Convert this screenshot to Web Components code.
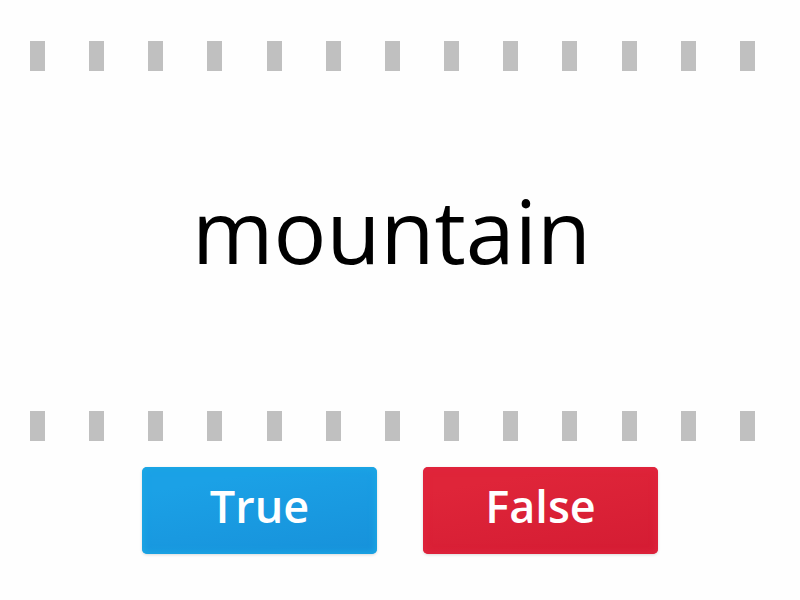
<!DOCTYPE html>
<html lang="en">
<head>
  <meta charset="UTF-8">
  <meta name="viewport" content="width=device-width, initial-scale=1">
  <title>True or False</title>
  <style>
    body {
      margin: 0;
      background: #fefefe;
      color: #000;
      font-family: "Open Sans", "Noto Sans", sans-serif;
    }
  </style>
</head>
<body>
  <true-false-game>
    <film-strip slot="question">mountain</film-strip>
    <answer-button slot="answers" color="blue">True</answer-button>
    <answer-button slot="answers" color="red">False</answer-button>
  </true-false-game>

  <script>
    class FilmHoles extends HTMLElement {
      constructor() {
        super();
        this.attachShadow({ mode: 'open' });
      }

      connectedCallback() {
        const count = Number(this.getAttribute('count')) || 13;

        this.shadowRoot.innerHTML = `
          <style>
            :host {
              display: flex;
              justify-content: space-between;
            }

            span {
              width: 15px;
              height: 30px;
              background: #c0c0c0;
            }
          </style>
          ${'<span></span>'.repeat(count)}
        `;
      }
    }

    class FilmStrip extends HTMLElement {
      constructor() {
        super();
        this.attachShadow({ mode: 'open' });
      }

      connectedCallback() {
        this.shadowRoot.innerHTML = `
          <style>
            :host {
              display: flex;
              flex-direction: column;
              padding: 0 45px 0 30px;
            }

            .word {
              margin: 0;
              padding: 99px 2px 121px 0;
              font-size: 88px;
              font-weight: 400;
              line-height: 120px;
              text-align: center;
            }
          </style>

          <film-holes count="13"></film-holes>
          <h1 class="word"><slot></slot></h1>
          <film-holes count="13"></film-holes>
        `;
      }
    }

    class AnswerButton extends HTMLElement {
      constructor() {
        super();
        this.attachShadow({ mode: 'open' });
      }

      connectedCallback() {
        this.shadowRoot.innerHTML = `
          <style>
            :host {
              display: block;
              flex: 0 1 235px;
              --top: #1ba1e6;
              --bottom: #1791da;
              --edge: #1ba7e4;
            }

            :host([color="red"]) {
              --top: #df2539;
              --bottom: #d41c33;
              --edge: #e0243e;
            }

            button {
              display: block;
              width: 100%;
              padding: 7px 0 16px;
              border: 0;
              border-radius: 5px;
              background: linear-gradient(170deg, var(--top) 20%, var(--bottom));
              box-shadow: inset 0 0 6px 2px var(--edge), 0 1px 3px rgba(0, 0, 0, 0.15);
              color: #fff;
              font: inherit;
              font-size: 45px;
              font-weight: 600;
              line-height: 64px;
              cursor: pointer;
            }
          </style>

          <button type="button"><slot></slot></button>
        `;

        this.shadowRoot
          .querySelector('button')
          .addEventListener('click', () => {
            this.dispatchEvent(
              new CustomEvent('answer', {
                detail: { value: this.textContent },
                bubbles: true,
                composed: true,
              })
            );
          });
      }
    }

    class TrueFalseGame extends HTMLElement {
      constructor() {
        super();
        this.attachShadow({ mode: 'open' });
      }

      connectedCallback() {
        this.shadowRoot.innerHTML = `
          <style>
            :host {
              display: block;
              padding-top: 41px;
            }

            .answers {
              display: flex;
              justify-content: center;
              gap: 46px;
              padding: 26px 20px;
            }
          </style>

          <slot name="question"></slot>
          <div class="answers">
            <slot name="answers"></slot>
          </div>
        `;
      }
    }

    customElements.define('film-holes', FilmHoles);
    customElements.define('film-strip', FilmStrip);
    customElements.define('answer-button', AnswerButton);
    customElements.define('true-false-game', TrueFalseGame);
  </script>
</body>
</html>
